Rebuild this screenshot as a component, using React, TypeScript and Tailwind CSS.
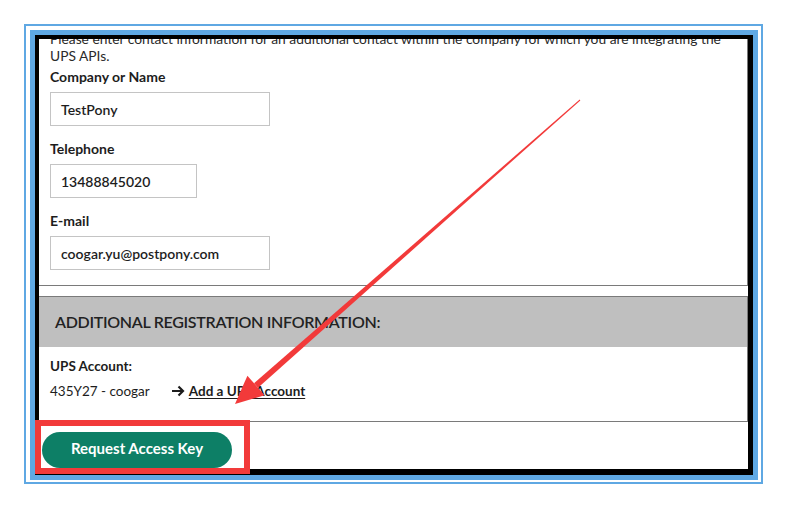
const Field = ({ label, value, width }: { label: string; value: string; width: string }) => (
  <div className="flex flex-col">
    <div className="text-[14px] leading-[18px] font-bold text-[#1d1d1d]">{label}</div>
    <div
      className={`mt-[6px] flex h-[34px] items-center border border-[#c4c4c4] bg-white pl-[10px] text-[14px] font-semibold text-[#1d1d1d] ${width}`}
    >
      {value}
    </div>
  </div>
);

const ArrowOverlay = () => (
  <svg className="pointer-events-none absolute inset-0" width="788" height="509" viewBox="0 0 788 509">
    <polygon points="580.3,100.4 579.7,99.6 254,383.3 258,387.8" fill="#f23a3a" />
    <polygon points="235,404 247.4,375.8 264.6,395.3" fill="#f23a3a" />
  </svg>
);

export default function App() {
  return (
    <div className="relative h-[509px] w-[788px] overflow-hidden bg-white font-['Lato',sans-serif] text-[#1d1d1d]">
      <div className="ml-[24px] mt-[24px] h-[460px] w-[739px] border-2 border-[#5fa8e3] pb-[2px] pl-[4px] pr-[3px] pt-[4px]">
        <div className="h-full w-full border-[5px] border-[#5fa8e3]">
          <div className="h-full w-full overflow-hidden border-b-[6px] border-l-4 border-r-[5px] border-t-4 border-black bg-white">
            <div className="border-b border-r border-[#7a7a7a] px-[11px] pb-[15px]">
              <p className="-mt-[9.5px] whitespace-nowrap text-[13.8px] leading-[17.5px] text-[#2a2a2a]">
                Please enter contact information for an additional contact within the company for which you are integrating the
                <br />
                UPS APIs.
              </p>
              <div className="mt-[3.5px] flex flex-col gap-[14px]">
                <Field label="Company or Name" value="TestPony" width="w-[220px]" />
                <Field label="Telephone" value="13488845020" width="w-[147px]" />
                <Field label="E-mail" value="coogar.yu@postpony.com" width="w-[220px]" />
              </div>
            </div>

            <div className="mt-[10px] border-y border-r border-[#7a7a7a]">
              <div className="flex h-[50px] items-center bg-[#bfbfbf] pl-[16px] text-[16px] font-semibold uppercase tracking-[-0.3px] text-[#222]">
                Additional Registration Information:
              </div>
              <div className="px-[11px] pb-[21px] pt-[10px]">
                <div className="text-[13.5px] leading-[18px] font-bold">UPS Account:</div>
                <div className="mt-[7px] flex items-center text-[13.5px] leading-[18px]">
                  <span>435Y27 - coogar</span>
                  <span className="ml-[21px] flex items-center font-bold">
                    <svg width="14" height="14" viewBox="0 0 14 14" className="mr-[4px]">
                      <path d="M1 7h11M7.5 2.5 12 7l-4.5 4.5" fill="none" stroke="#1d1d1d" strokeWidth="2.2" />
                    </svg>
                    <span className="underline underline-offset-2">Add a UPS Account</span>
                  </span>
                </div>
              </div>
            </div>

            <div className="ml-[3px] mt-[10px]">
              <button
                type="button"
                className="flex h-[36px] w-[190px] items-center justify-center rounded-full bg-[#0d7f66] pb-[4px] text-[15px] font-bold text-white"
              >
                Request Access Key
              </button>
            </div>
          </div>
        </div>
      </div>

      <div className="absolute left-[35px] top-[420px] h-[54px] w-[215px] border-[6px] border-[#f23a3a]" />
      <ArrowOverlay />
    </div>
  );
}
